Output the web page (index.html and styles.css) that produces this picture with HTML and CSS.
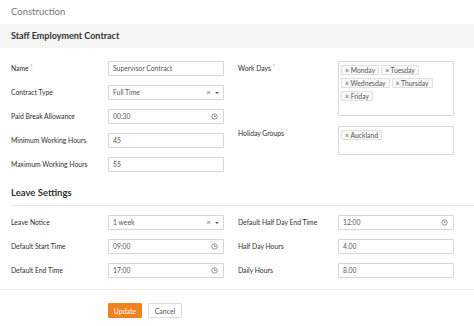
FILE: index.html
```html
<!DOCTYPE html>
<html lang="en">
<head>
  <meta charset="UTF-8">
  <title>Staff Employment Contract</title>
  <link rel="stylesheet" href="styles.css">
</head>
<body>

  <!-- Page title -->
  <div class="page-title">Construction</div>

  <!-- Contract section -->
  <div class="section-band">Staff Employment Contract</div>

  <div class="form-grid first">
    <div class="col">
      <div class="row">
        <label class="lbl">Name <span class="req">*</span></label>
        <div class="input">Supervisor Contract</div>
      </div>
      <div class="row">
        <label class="lbl">Contract Type</label>
        <div class="input select">Full Time<span class="sel-ctrl"><span class="clear">&times;</span><span class="caret"></span></span></div>
      </div>
      <div class="row">
        <label class="lbl">Paid Break Allowance</label>
        <div class="input time">00:30<svg class="clock" viewBox="0 0 10 10"><circle cx="5" cy="5" r="3.8"/><path d="M5 2.8V5H6.6"/></svg></div>
      </div>
      <div class="row">
        <label class="lbl">Minimum Working Hours</label>
        <div class="input">45</div>
      </div>
      <div class="row">
        <label class="lbl">Maximum Working Hours</label>
        <div class="input">55</div>
      </div>
    </div>

    <div class="col">
      <div class="row top">
        <label class="lbl">Work Days <span class="req">*</span></label>
        <div class="tags days">
          <span class="tag">&times; Monday</span>
          <span class="tag">&times; Tuesday</span>
          <span class="tag">&times; Wednesday</span>
          <span class="tag">&times; Thursday</span>
          <span class="tag">&times; Friday</span>
        </div>
      </div>
      <div class="row top">
        <label class="lbl">Holiday Groups <span class="req">*</span></label>
        <div class="tags groups">
          <span class="tag">&times; Auckland</span>
        </div>
      </div>
    </div>
  </div>

  <!-- Leave section -->
  <div class="sub-title">Leave Settings</div>

  <div class="form-grid leave">
    <div class="col">
      <div class="row">
        <label class="lbl">Leave Notice</label>
        <div class="input select">1 week<span class="sel-ctrl"><span class="clear">&times;</span><span class="caret"></span></span></div>
      </div>
      <div class="row">
        <label class="lbl">Default Start Time</label>
        <div class="input time">09:00<svg class="clock" viewBox="0 0 10 10"><circle cx="5" cy="5" r="3.8"/><path d="M5 2.8V5H6.6"/></svg></div>
      </div>
      <div class="row">
        <label class="lbl">Default End Time</label>
        <div class="input time">17:00<svg class="clock" viewBox="0 0 10 10"><circle cx="5" cy="5" r="3.8"/><path d="M5 2.8V5H6.6"/></svg></div>
      </div>
    </div>

    <div class="col">
      <div class="row">
        <label class="lbl">Default Half Day End Time</label>
        <div class="input time">12:00<svg class="clock" viewBox="0 0 10 10"><circle cx="5" cy="5" r="3.8"/><path d="M5 2.8V5H6.6"/></svg></div>
      </div>
      <div class="row">
        <label class="lbl">Half Day Hours</label>
        <div class="input">4.00</div>
      </div>
      <div class="row">
        <label class="lbl">Daily Hours</label>
        <div class="input">8.00</div>
      </div>
    </div>
  </div>

  <!-- Actions -->
  <div class="actions">
    <button class="btn primary">Update</button>
    <button class="btn">Cancel</button>
  </div>

</body>
</html>
```

FILE: styles.css
```css
body {
  margin: 0;
  font-family: Lato, "Open Sans", sans-serif;
  color: #333;
  background: #fff;
}

.page-title {
  height: 24px;
  line-height: 24px;
  padding-left: 11px;
  font-size: 9.5px;
  color: #777;
}

.section-band {
  height: 24px;
  line-height: 24px;
  padding-left: 11px;
  background: #f5f5f5;
  font-size: 9px;
  font-weight: bold;
  color: #333;
}

.form-grid {
  display: flex;
  padding-left: 11px;
}

.form-grid.first {
  padding-top: 13px;
  height: 122px;
}

.col {
  width: 227px;
  display: flex;
  flex-direction: column;
  gap: 9px;
}

.col + .col {
  width: 216px;
}

.col:first-child .lbl {
  width: 97px;
}

.row {
  display: flex;
  align-items: center;
}

.row.top {
  align-items: flex-start;
}

.row.top + .row.top {
  margin-top: 1px;
}

.lbl {
  width: 100px;
  flex: none;
  font-size: 6.8px;
  color: #2f2f2f;
  line-height: 15px;
}

.req {
  color: #e04b4b;
  font-size: 5px;
  vertical-align: top;
  line-height: 11px;
}

.input {
  width: 116px;
  height: 15px;
  box-sizing: border-box;
  border: 1px solid #d6d6d6;
  border-radius: 1px;
  padding: 0 4px;
  font-size: 6.8px;
  line-height: 13px;
  color: #555;
  display: flex;
  align-items: center;
  justify-content: space-between;
}

.sel-ctrl {
  display: flex;
  align-items: center;
  gap: 4px;
}

.clear {
  font-size: 8px;
  color: #777;
}

.caret {
  width: 0;
  height: 0;
  border-left: 2px solid transparent;
  border-right: 2px solid transparent;
  border-top: 2.5px solid #555;
}

.clock {
  width: 7px;
  height: 7px;
  margin-right: 1px;
  fill: none;
  stroke: #555;
  stroke-width: 0.9;
}

.tags {
  width: 116px;
  box-sizing: border-box;
  border: 1px solid #d6d6d6;
  border-radius: 1px;
  padding: 3px 2px;
  display: flex;
  flex-wrap: wrap;
  align-content: flex-start;
  gap: 3px 2px;
}

.tags.days {
  height: 55px;
}

.tags.groups {
  height: 29px;
}

.tag {
  font-size: 6.8px;
  color: #555;
  line-height: 8px;
  padding: 0 3px;
  border: 1px solid #e0e0e0;
  background: #f8f8f8;
  border-radius: 1px;
}

.sub-title {
  margin-left: 11px;
  height: 22px;
  line-height: 20px;
  font-size: 9.5px;
  font-weight: bold;
  color: #333;
  border-bottom: 1px solid #e8e8e8;
}

.form-grid.leave {
  padding-top: 9px;
  padding-bottom: 11px;
  border-bottom: 1px solid #eee;
}

.actions {
  display: flex;
  gap: 6px;
  padding: 13px 0 0 108px;
}

.btn {
  height: 15px;
  width: 34px;
  padding: 0;
  font-family: inherit;
  font-size: 7px;
  border: 1px solid #ddd;
  border-radius: 1px;
  background: #fff;
  color: #555;
  cursor: pointer;
}

.btn.primary {
  background: #f0821e;
  border-color: #f0821e;
  color: #fff;
}
```
